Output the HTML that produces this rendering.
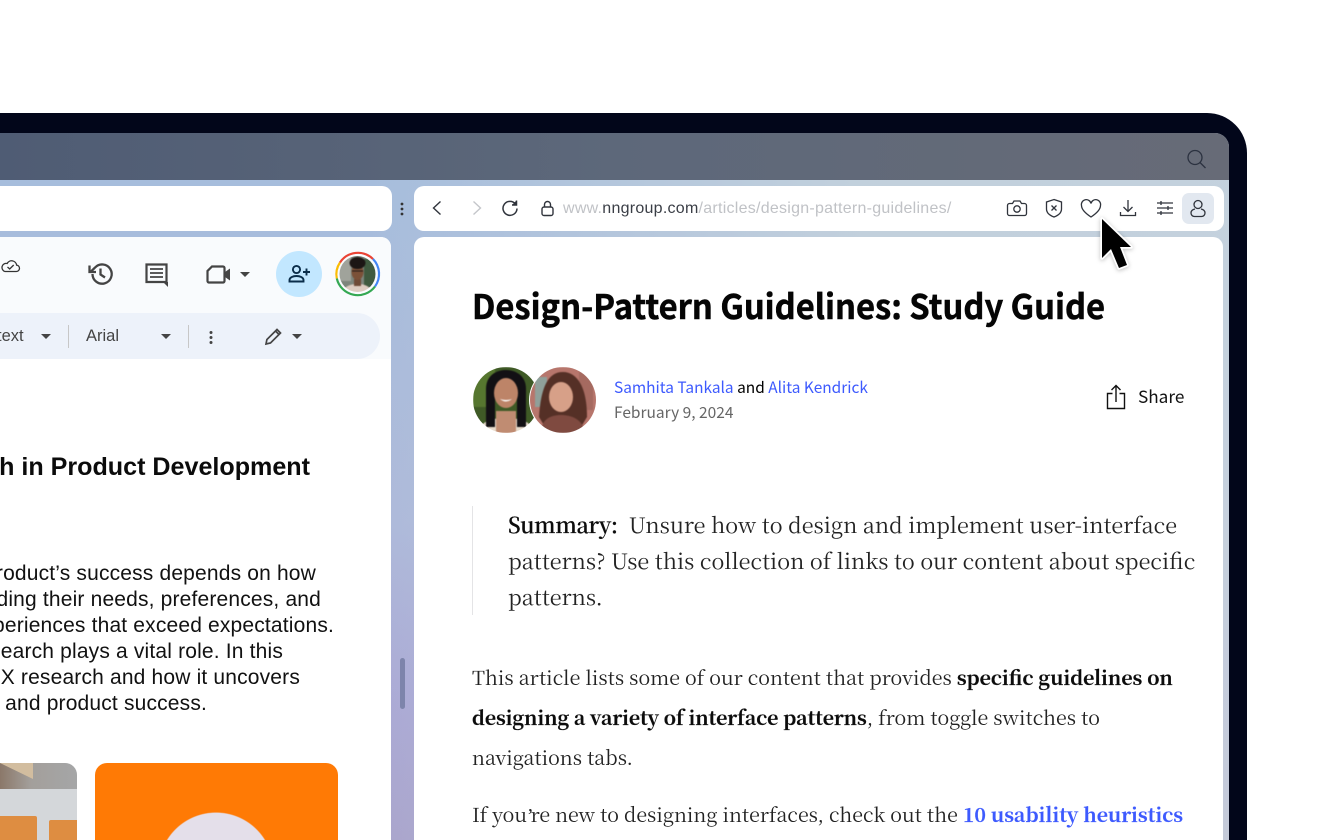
<!DOCTYPE html>
<html><head><meta charset="utf-8"><style>
html,body{margin:0;padding:0;width:1344px;height:840px;overflow:hidden;background:#fff}
#w{position:relative;width:1344px;height:840px;overflow:hidden;background:#fff}
.a{position:absolute}
.t{position:absolute;white-space:nowrap}
.s{font-family:"Noto Sans CJK JP","Liberation Sans",sans-serif}
.r{font-family:"Noto Serif CJK SC","Liberation Serif",serif;font-size:21.600px;line-height:36px;color:#222;font-weight:400}
.b{font-size:19.630px}
.r b{font-weight:700;color:#0c0c0c;-webkit-text-stroke:.2px currentColor}
.q{font-family:"Liberation Serif",serif;letter-spacing:-3px}
.i{font-family:"Liberation Sans",sans-serif;font-size:21px;letter-spacing:.17px;line-height:26px;color:#111}
svg{position:absolute;overflow:visible}
</style></head><body><div id="w">
<div class="a" style="left:0;top:113px;width:1247px;height:727px;background:#02061a;border-radius:0 40px 0 0"></div>
<div class="a" style="left:0;top:133px;width:1229px;height:707px;border-radius:0 14px 0 0;overflow:hidden;background:linear-gradient(90deg,rgba(210,220,222,0) 30%,rgba(208,218,220,.65) 70%,rgba(208,218,222,.7)),linear-gradient(180deg,#a6bddc 6%,#adb9da 55%,#aaa9d5 80%,#a9a4cc 100%)">
  <div class="a" style="left:0;top:0;width:1229px;height:47px;background:linear-gradient(90deg,#4f5c74,#5d687a 50%,#676b77)"></div>
</div>
<svg style="left:1185px;top:148px" width="24" height="24" viewBox="0 0 24 24" fill="none" stroke="#2b3240" stroke-width="1.300"><circle cx="10" cy="9.500" r="7"/><path d="M15 14.500l5.500 5.500"/></svg>

<div class="a" style="left:0;top:186px;width:392px;height:45px;background:#fff;border-radius:0 10px 10px 0"></div>
<div class="a" style="left:0;top:237px;width:391px;height:603px;background:#fff;border-radius:0 10px 0 0;overflow:hidden">
  <div class="a" style="left:0;top:0;width:391px;height:122px;background:#f9fbfd"></div>
  <div class="a" style="left:0;top:76px;width:380px;height:46px;background:#edf2fa;border-radius:0 23px 23px 0"></div>
</div>
<svg style="left:399px;top:201px" width="6" height="16"><circle cx="3" cy="3" r="1.400" fill="#333"/><circle cx="3" cy="8" r="1.400" fill="#333"/><circle cx="3" cy="13" r="1.400" fill="#333"/></svg>
<div class="a" style="left:400px;top:658px;width:5px;height:51px;border-radius:3px;background:#7d84ab"></div>

<!-- doc toolbar -->
<svg style="left:0;top:256px" width="22" height="18" viewBox="0 0 22 18" fill="none" stroke="#333" stroke-width="1.300"><path d="M5 15.500h11a3.200 3.200 0 0 0 .6-6.400 5 5 0 0 0-9.400-1.600A4 4 0 0 0 5 15.500z"/><path d="M7.500 11l2.200 2 4-4"/></svg>
<svg style="left:88px;top:261px" width="24" height="26" viewBox="0 0 24 26" fill="none" stroke="#444" stroke-width="2.300"><path d="M4.500 13a9.600 9.600 0 1 0 2.600-6.500L2.500 11"/><path d="M1.500 4.500v6.500h6.500"/><path d="M12.500 7.500v6l4.500 3"/></svg>
<svg style="left:145px;top:263px" width="24" height="25" viewBox="0 0 24 25" fill="none" stroke="#444" stroke-width="2.200"><path d="M1.500 1.500h20v17.500H1.500z"/><path d="M5 6h13M5 10h13M5 14h13" stroke-width="1.800"/><path d="M18 19h5v5z" fill="#444" stroke="none"/></svg>
<svg style="left:206px;top:265px" width="26" height="19" viewBox="0 0 26 19" fill="none" stroke="#444" stroke-width="2.200"><path d="M6 1.500h11a1.500 1.500 0 0 1 1.500 1.500v13a1.500 1.500 0 0 1-1.500 1.500H3A1.500 1.500 0 0 1 1.500 16V6z"/><path d="M19 7l5-3.500v12L19 12z" fill="#444" stroke="none"/></svg>
<svg style="left:240px;top:272px" width="10" height="5"><path d="M0 0h10L5 5z" fill="#444"/></svg>
<div class="a" style="left:276px;top:251px;width:46px;height:46px;border-radius:50%;background:#c2e7ff"></div>
<svg style="left:288px;top:264px" width="24" height="20" viewBox="0 0 24 20" fill="none" stroke="#0a2d4a" stroke-width="1.900"><circle cx="8.500" cy="5.500" r="3.600"/><path d="M1.500 17.500v-1.500c0-2.500 3.500-4 7-4s7 1.500 7 4v1.500z"/><path d="M18.500 4.500v7M15 8h7"/></svg>
<svg style="left:335px;top:251px" width="46" height="46" viewBox="0 0 46 46">
  <defs><clipPath id="av"><circle cx="22.500" cy="23" r="18"/></clipPath></defs>
  <g fill="none" stroke-width="2.200">
  <path d="M1.800 27.500A21 21 0 0 1 5 11.500" stroke="#fbbc04"/>
  <path d="M5 11.500A21.500 21.500 0 0 1 38 8" stroke="#ea4335"/>
  <path d="M38 8A21.500 21.500 0 0 1 40 35.500" stroke="#4285f4"/>
  <path d="M40 35.500A21.500 21.500 0 0 1 1.800 27.500" stroke="#34a853"/></g>
  <g clip-path="url(#av)" style="filter:blur(.4px)"><rect width="46" height="46" fill="#7d857c"/><rect x="29" y="8" width="14" height="28" fill="#3f5a3f"/><rect x="4" y="5" width="12" height="25" fill="#a0a39b"/>
  <path d="M7 42c2-7 9-9 15.500-9s13 2 15 9z" fill="#dccbc0"/><rect x="19" y="28" width="7" height="7" fill="#6f4a36"/><ellipse cx="22.500" cy="21" rx="6" ry="8" fill="#7b5138"/><ellipse cx="22.500" cy="12" rx="8" ry="6" fill="#1c1614"/><path d="M17 20h11" stroke="#221a17" stroke-width="1"/></g>
</svg>

<div class="t" style="left:-3px;top:325px;font:16.500px/22px 'Liberation Sans',sans-serif;color:#444">text</div>
<svg style="left:41px;top:334px" width="10" height="5"><path d="M0 0h10L5 5z" fill="#444"/></svg>
<div class="a" style="left:68px;top:325px;width:1px;height:23px;background:#c7c7c7"></div>
<div class="t" style="left:86px;top:325px;font:16.500px/22px 'Liberation Sans',sans-serif;color:#444">Arial</div>
<svg style="left:161px;top:334px" width="10" height="5"><path d="M0 0h10L5 5z" fill="#444"/></svg>
<div class="a" style="left:188px;top:325px;width:1px;height:23px;background:#c7c7c7"></div>
<svg style="left:208px;top:330px" width="6" height="15"><circle cx="3" cy="2.500" r="1.500" fill="#444"/><circle cx="3" cy="7.500" r="1.500" fill="#444"/><circle cx="3" cy="12.500" r="1.500" fill="#444"/></svg>
<svg style="left:265px;top:328px" width="17" height="17" viewBox="0 0 17 17" fill="none" stroke="#444" stroke-width="1.700"><path d="M1 16l.9-4.500L12 1.500 15.500 5 5.500 15z"/><path d="M10.500 3l3.500 3.500"/></svg>
<svg style="left:292px;top:334px" width="10" height="5"><path d="M0 0h10L5 5z" fill="#444"/></svg>

<!-- doc content: clipped at the left frame edge -->
<div class="a" style="left:0;top:440px;width:391px;height:290px;overflow:hidden">
<div class="t" style="right:81px;top:12px;font:700 25.100px/30px 'Liberation Sans',sans-serif;color:#0b0b0b">ch in Product Development</div>
<div class="t i" style="right:75px;top:121px">product’s success depends on how</div>
<div class="t i" style="right:70px;top:147px">understanding their needs, preferences, and</div>
<div class="t i" style="right:57px;top:173px">creating experiences that exceed expectations.</div>
<div class="t i" style="right:108px;top:199px">UX research plays a vital role. In this</div>
<div class="t i" style="right:91px;top:225px">explore UX research and how it uncovers</div>
<div class="t i" style="right:184px;top:251px">user satisfaction and product success.</div>
</div>

<div class="a" style="left:0;top:763px;width:77px;height:77px;border-radius:0 12px 0 0;overflow:hidden;background:#d4d7da">
  <div class="a" style="left:0;top:0;width:77px;height:26px;background:linear-gradient(90deg,#8b7869 0,#a39f9b 40%,#a5a6a7 100%)"></div>
  <div class="a" style="left:0;top:0;width:33px;height:16px;background:#d2bd9f;clip-path:polygon(0 0,100% 0,100% 100%)"></div>
  <div class="a" style="left:0;top:53px;width:37px;height:24px;background:#de8d41;border-radius:0 2px 0 0"></div>
  <div class="a" style="left:49px;top:57px;width:28px;height:20px;background:#de8d41;border-radius:2px 0 0 0"></div>
</div>
<div class="a" style="left:95px;top:763px;width:243px;height:77px;border-radius:12px 12px 0 0;overflow:hidden;background:radial-gradient(circle 58px at 121px 107px,#e4dfea 98%,#ff7a05 100%)"></div>

<!-- right address bar -->
<div class="a" style="left:414px;top:186px;width:810px;height:45px;background:#fff;border-radius:10px"></div>
<svg style="left:430px;top:200px" width="14" height="16" fill="none" stroke="#30343c" stroke-width="1.400"><path d="M10.500 1.500L3.500 8l7 6.500"/></svg>
<svg style="left:470px;top:200px" width="14" height="16" fill="none" stroke="#c4c6ca" stroke-width="1.400"><path d="M3.500 1.500L10.500 8l-7 6.500"/></svg>
<svg style="left:501px;top:199px" width="18" height="18" viewBox="0 0 18 18" fill="none" stroke="#30343c" stroke-width="1.500"><path d="M14.500 5A7 7 0 1 0 16 9.500"/><path d="M15.500 1.500V6h-4.500" fill="#30343c"/></svg>
<svg style="left:540px;top:200px" width="15" height="17" viewBox="0 0 15 17" fill="none" stroke="#30343c" stroke-width="1.400"><rect x="2" y="7" width="11" height="8.500" rx="2"/><path d="M4.500 7V4.500a3 3 0 0 1 6 0V7"/></svg>
<div class="t" style="left:563px;top:199px;font:16px/20px 'Liberation Sans',sans-serif;color:#c0c2c6;letter-spacing:.26px">www.<span style="color:#3a3e46">nngroup.com</span>/articles/design-pattern-guidelines/</div>

<svg style="left:1006px;top:198px" width="22" height="20" viewBox="0 0 22 20" fill="none" stroke="#30343c" stroke-width="1.300"><path d="M3.500 5.500h3l1.500-2.500h6l1.500 2.500h3a2 2 0 0 1 2 2v8a2 2 0 0 1-2 2h-15a2 2 0 0 1-2-2v-8a2 2 0 0 1 2-2z"/><circle cx="11" cy="11" r="3.200"/></svg>
<svg style="left:1045px;top:198px" width="18" height="20" viewBox="0 0 18 20" fill="none" stroke="#30343c" stroke-width="1.300"><path d="M9 1.500L16.500 4v7c0 4-3.500 6.500-7.500 8C5 17.500 1.500 15 1.500 11V4z"/><path d="M6.500 7.500l5 5M11.500 7.500l-5 5"/></svg>
<svg style="left:1080px;top:199px" width="22" height="19" viewBox="0 0 22 19" fill="none" stroke="#30343c" stroke-width="1.300"><path d="M11 18C5 14 1.500 10.500 1.500 6.500A4.800 4.800 0 0 1 11 4.500a4.800 4.800 0 0 1 9.500 2c0 4-3.500 7.500-9.500 11.500z"/></svg>
<svg style="left:1119px;top:199px" width="18" height="18" viewBox="0 0 18 18" fill="none" stroke="#30343c" stroke-width="1.300"><path d="M9 1v11M4.500 8L9 12.500 13.500 8"/><path d="M1.500 13v3.500h15V13"/></svg>
<svg style="left:1156px;top:200px" width="18" height="16" viewBox="0 0 18 16" fill="none" stroke="#30343c" stroke-width="1.300"><path d="M1 3h16M1 8h16M1 13h16"/><path d="M5 1v4M12 6v4M5 11v4"/></svg>
<div class="a" style="left:1182px;top:193px;width:32px;height:31px;border-radius:7px;background:#e2e8f0"></div>
<svg style="left:1190px;top:199px" width="16" height="19" viewBox="0 0 16 19" fill="none" stroke="#30343c" stroke-width="1.300"><circle cx="8" cy="5.500" r="4"/><path d="M5 10c-2.500.5-4 2-4 4s1.500 3.500 3.500 3.500h7c2 0 3.500-1.500 3.500-3.500s-1.500-3.500-4-4"/></svg>

<!-- article -->
<div class="a" style="left:414px;top:237px;width:809px;height:603px;background:#fff;border-radius:10px 10px 0 0;overflow:hidden">
<div class="t s" style="left:58px;top:45px;font-size:34px;line-height:46px;font-weight:700;color:#050505;-webkit-text-stroke:.5px #050505;transform:scaleX(.963);transform-origin:0 50%">Design-Pattern Guidelines: Study Guide</div>

<svg style="left:59px;top:130px" width="124" height="67" viewBox="0 0 124 67">
  <defs><clipPath id="c1"><circle cx="33" cy="33" r="33"/></clipPath><clipPath id="c2"><circle cx="90" cy="33" r="33"/></clipPath></defs>
  <g clip-path="url(#c1)" style="filter:blur(.5px)"><rect width="66" height="66" fill="#3f5a26"/><path d="M0 0h22v40H0z" fill="#56762f"/><path d="M6 66c0-12 14-15 27-15s27 3 27 15z" fill="#e8dccd"/><path d="M13 60V22C13 8 24 3 33 3s20 5 20 19v38H44V30H22v30z" fill="#121014"/><path d="M23 44h20v22H23z" fill="#c08c72"/><ellipse cx="33" cy="26" rx="12" ry="15" fill="#bd8468"/><path d="M27 32q6 5 12 0-6 2-12 0z" fill="#fff"/></g>
  <circle cx="90" cy="33" r="34" fill="#fff"/>
  <g clip-path="url(#c2)" style="filter:blur(.5px)"><rect x="56" width="68" height="66" fill="#b7766c"/><rect x="62" y="10" width="12" height="30" fill="#8fa09a"/><rect x="106" y="5" width="14" height="38" fill="#a56a60"/><path d="M66 50C68 18 76 5 90 5s24 15 24 45l-6 10H72z" fill="#553026"/><ellipse cx="88" cy="30" rx="12" ry="15" fill="#d7a088"/><path d="M68 66c0-14 10-18 20-18s22 4 24 18z" fill="#7f4a40"/></g>
</svg>
<div class="t s" style="left:200px;top:138px;font-size:15.450px;line-height:24px;color:#000"><span style="color:#3d5afe">Samhita Tankala</span> and <span style="color:#3d5afe">Alita Kendrick</span></div>
<div class="t s" style="left:200px;top:163px;font-size:15.500px;line-height:24px;color:#666">February 9, 2024</div>
<svg style="left:692px;top:147px" width="20" height="26" viewBox="0 0 20 26" fill="none" stroke="#111" stroke-width="1.400"><path d="M6.500 9.500H1.500v15h17v-15H13.500"/><path d="M10 18V1.500M5.500 6L10 1.500 14.500 6"/></svg>
<div class="t s" style="left:724px;top:146px;font-size:17.200px;line-height:26px;color:#111">Share</div>

<div class="a" style="left:58px;top:269px;width:1px;height:109px;background:#e4e4e6"></div>
<div class="t r" style="left:94px;top:270px"><b style="font-weight:600;letter-spacing:-.3px">Summary:</b>&nbsp; Unsure how to design and implement user-interface</div>
<div class="t r" style="left:94px;top:306px">patterns? Use this collection of links to our content about specific</div>
<div class="t r" style="left:94px;top:342px">patterns.</div>
<div class="t r b" style="left:58px;top:422px">This article lists some of our content that provides <b>specific guidelines on</b></div>
<div class="t r b" style="left:58px;top:462px"><b style="letter-spacing:-.08px">designing a variety of interface patterns</b>, from toggle switches to</div>
<div class="t r b" style="left:58px;top:502px">navigations tabs.</div>
<div class="t r b" style="left:58px;top:559px">If you<span class="q">’</span>re new to designing interfaces, check out the <b style="color:#3d5afe">10 usability heuristics</b></div>
</div>

<!-- cursor -->
<svg style="left:1095px;top:212px" width="44" height="64" viewBox="0 0 44 64"><path d="M7 7v39l9-9 8 19 8-3-7-18h11z" fill="#000" stroke="#fff" stroke-width="3.500" stroke-linejoin="round" paint-order="stroke" style="filter:drop-shadow(0 1px 2px rgba(0,0,0,.25))"/></svg>
</div></body></html>
